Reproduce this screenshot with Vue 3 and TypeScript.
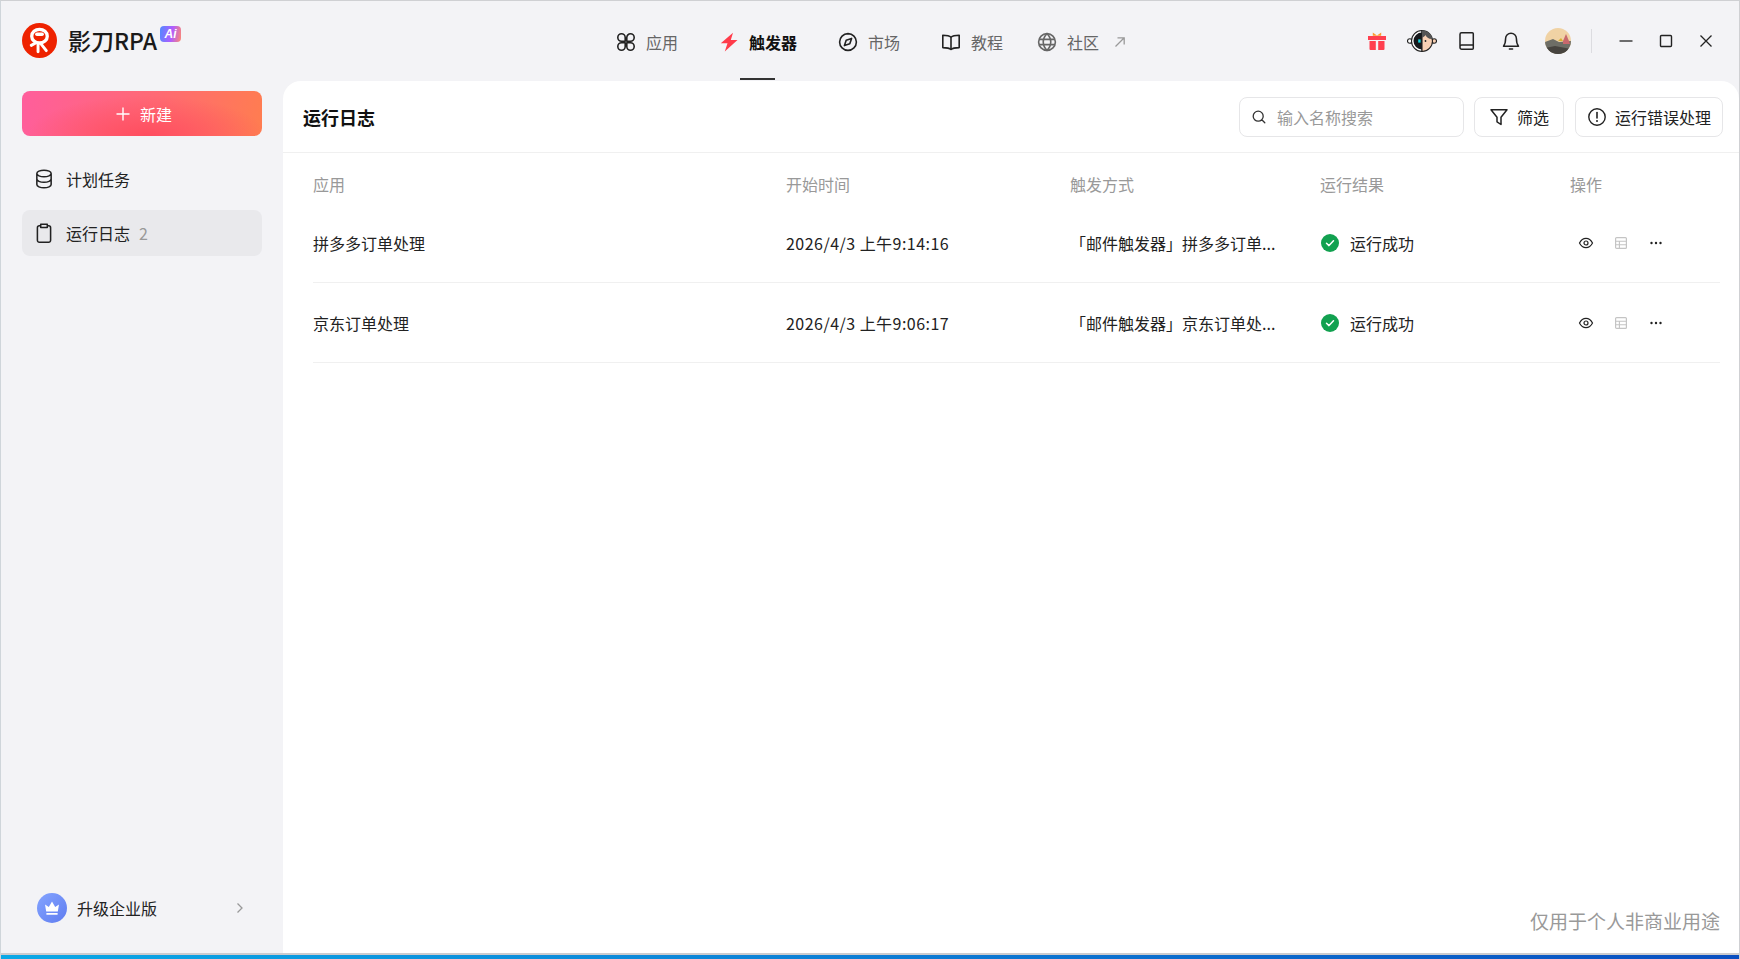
<script setup lang="ts">
interface NavItem {
  label: string
  active?: boolean
  muted?: boolean
  filled?: boolean
  paths: string[]
}

interface LogRow {
  app: string
  time: string
  trigger: string
}

const navItems: NavItem[] = [
  {
    label: '应用',
    paths: [
      'M5.500 1.800a3.700 3.700 0 0 1 3.700 3.700v3.700H5.500a3.700 3.700 0 0 1 0-7.400z',
      'M14.500 1.800a3.700 3.700 0 0 1 0 7.400h-3.700V5.500a3.700 3.700 0 0 1 3.700-3.700z',
      'M5.500 10.800h3.700v3.700a3.700 3.700 0 1 1-3.700-3.700z',
      'M10.800 10.800h3.700a3.700 3.700 0 1 1-3.700 3.700z',
    ],
  },
  { label: '触发器', active: true, filled: true, paths: ['M14 .8 1.800 11.300h6.700L5.800 19.400 18.500 8h-6.700z'] },
  {
    label: '市场',
    paths: [
      'M10 1.600a8.400 8.400 0 1 0 0 16.800a8.400 8.400 0 0 0 0-16.800z',
      'M13.600 6.400 11.800 11.800 6.400 13.600 8.200 8.200z',
    ],
  },
  {
    label: '教程',
    paths: [
      'M10 5.200C8.600 3.800 6 3.200 1.800 3.200v12.400c4.200 0 6.800.5 8.200 1.900 1.400-1.400 4-1.900 8.200-1.900V3.200C14 3.200 11.400 3.800 10 5.200z',
      'M10 5.200v12.300',
    ],
  },
  {
    label: '社区',
    muted: true,
    paths: [
      'M10 1.600a8.400 8.400 0 1 0 0 16.800a8.400 8.400 0 0 0 0-16.800z',
      'M10 1.600c-5 5-5 11.800 0 16.800c5-5 5-11.800 0-16.800z',
      'M2 7.400h16M2 12.600h16',
    ],
  },
]

const columns = ['应用', '开始时间', '触发方式', '运行结果', '操作']

const rows: LogRow[] = [
  { app: '拼多多订单处理', time: '2026/4/3 上午9:14:16', trigger: '「邮件触发器」拼多多订单...' },
  { app: '京东订单处理', time: '2026/4/3 上午9:06:17', trigger: '「邮件触发器」京东订单处...' },
]
</script>

<template>
  <div class="window">
    <header class="topbar">
      <div class="brand">
        <svg class="brand-logo" viewBox="0 0 36 36" width="35" height="35">
          <circle cx="18" cy="18" r="18" fill="#ee2200" />
          <ellipse cx="18" cy="13.500" rx="8" ry="7" fill="none" stroke="#fff" stroke-width="3.400" />
          <rect x="13.500" y="9.800" width="9" height="3.600" rx="1.800" fill="#fff" />
          <path d="M14 20.500 9.500 23M16.500 21v8.500M19.500 21.500l5.500 7" stroke="#fff" stroke-width="3" stroke-linecap="round" fill="none" />
        </svg>
        <span class="brand-name">影刀RPA</span>
        <span class="brand-ai">Ai</span>
      </div>

      <nav class="nav">
        <div
          v-for="item in navItems"
          :key="item.label"
          class="nav-item"
          :class="{ 'is-active': item.active, 'is-muted': item.muted }"
        >
          <svg viewBox="0 0 20 20" width="20" height="20" class="nav-icon">
            <path
              v-for="d in item.paths"
              :key="d"
              :d="d"
              :fill="item.filled ? '#ff3b4a' : 'none'"
              :stroke="item.filled ? 'none' : 'currentColor'"
              stroke-width="1.600"
              stroke-linejoin="round"
            />
          </svg>
          <span>{{ item.label }}</span>
          <svg v-if="item.muted" class="nav-out" viewBox="0 0 14 14" width="14" height="14">
            <path d="M2.500 11.500 11 3M4.500 2.800h6.700v6.700" fill="none" stroke="#999" stroke-width="1.300" />
          </svg>
        </div>
      </nav>

      <div class="tools">
        <svg class="tool" viewBox="0 0 20 20" width="20" height="20">
          <path d="M5.800 1.500 10 4.500l4.200-3v3.300H5.800z" fill="#ff9a2e" />
          <rect x="1" y="5" width="18" height="4" fill="#ff3f4f" />
          <path d="M2.500 10h6.300v9H3.500a1 1 0 0 1-1-1zM11.200 10h6.300v8a1 1 0 0 1-1 1h-5.300z" fill="#ff3f4f" />
        </svg>
        <svg class="tool tool-robot" viewBox="0 0 30 24" width="30" height="24">
          <circle cx="2.800" cy="12" r="2.300" fill="#fff" stroke="#222" stroke-width="1.100" />
          <circle cx="27.200" cy="12" r="2.300" fill="#f8d0b4" stroke="#222" stroke-width="1.100" />
          <path d="M15 1.500a10.500 10.500 0 0 0 0 21z" fill="#fff" stroke="#222" stroke-width="1.100" />
          <path d="M15 3.500a8.500 8.500 0 0 0 0 17z" fill="#16181c" />
          <path d="M15 1.500a10.500 10.500 0 0 1 0 21z" fill="#f8d0b4" stroke="#222" stroke-width="1.100" />
          <path d="M15 1.500c5.500 0 9.800 3.500 10.400 8.500-3.400.3-6-1.600-7-4-.6 1.300-1.800 2.200-3.400 2.500z" fill="#555" />
          <rect x="11.200" y="10.400" width="2.400" height="3.200" fill="#12d8e0" />
          <circle cx="18.500" cy="12" r=".9" fill="#222" />
        </svg>
        <svg class="tool" viewBox="0 0 20 20" width="20" height="20">
          <path d="M4.500 1.800h10.800a1 1 0 0 1 1 1v14.400a1 1 0 0 1-1 1H4.700a1.700 1.700 0 0 1-1.700-1.700V3.300a1.500 1.500 0 0 1 1.500-1.500zM3 15.300a1.500 1.500 0 0 1 1.500-1.300h11.800" fill="none" stroke="#222" stroke-width="1.500" />
        </svg>
        <svg class="tool" viewBox="0 0 20 20" width="20" height="20">
          <path d="M10 2.200a5.400 5.400 0 0 0-5.400 5.400c0 4.600-.9 6.200-2.100 7.600h15c-1.200-1.400-2.100-3-2.100-7.600A5.400 5.400 0 0 0 10 2.200zM8.400 18h3.200" fill="none" stroke="#222" stroke-width="1.500" stroke-linejoin="round" stroke-linecap="round" />
        </svg>
        <svg class="tool-avatar" viewBox="0 0 26 26" width="26" height="26">
          <defs>
            <clipPath id="avatar-clip"><circle cx="13" cy="13" r="13" /></clipPath>
          </defs>
          <g clip-path="url(#avatar-clip)">
            <rect width="26" height="26" fill="#f0d2a4" />
            <path d="M0 14 8 11l6 3 12-1v13H0z" fill="#6e6e66" />
            <path d="M0 20l10-2 16 3v5H0z" fill="#47443f" />
            <path d="M13 13l3-3 2 3z" fill="#d8b030" />
            <path d="M18 13l3-7 3 7 1 3h-7z" fill="#c8686c" />
          </g>
        </svg>
      </div>

      <div class="window-btns">
        <svg viewBox="0 0 16 16" width="16" height="16"><path d="M1.500 8h13" stroke="#222" stroke-width="1.300" /></svg>
        <svg viewBox="0 0 16 16" width="16" height="16"><rect x="2.500" y="2.500" width="11" height="11" rx="1" fill="none" stroke="#222" stroke-width="1.400" /></svg>
        <svg viewBox="0 0 16 16" width="16" height="16"><path d="M2.500 2.500l11 11M13.500 2.500l-11 11" stroke="#222" stroke-width="1.300" /></svg>
      </div>
    </header>

    <div class="body">
      <aside class="sidebar">
        <button class="new-btn" type="button">
          <svg viewBox="0 0 14 14" width="14" height="14"><path d="M7 .5v13M.5 7h13" stroke="#fff" stroke-width="1.400" /></svg>
          <span>新建</span>
        </button>

        <div class="side-item">
          <svg viewBox="0 0 20 20" width="22" height="22">
            <path d="M3.500 5c0-1.700 2.900-3 6.500-3s6.500 1.300 6.500 3v10c0 1.700-2.900 3-6.500 3s-6.500-1.300-6.500-3zM3.500 5c0 1.700 2.900 3 6.500 3s6.500-1.300 6.500-3M3.500 10c0 1.700 2.900 3 6.500 3s6.500-1.300 6.500-3" fill="none" stroke="#222" stroke-width="1.400" />
          </svg>
          <span>计划任务</span>
        </div>
        <div class="side-item is-current">
          <svg viewBox="0 0 20 20" width="22" height="22">
            <path d="M7 3.500H5.800A1.800 1.800 0 0 0 4 5.300v11.400a1.800 1.800 0 0 0 1.800 1.800h8.400a1.800 1.800 0 0 0 1.800-1.800V5.300a1.800 1.800 0 0 0-1.800-1.800H13M7 2h6v3H7z" fill="none" stroke="#222" stroke-width="1.400" stroke-linejoin="round" />
          </svg>
          <span>运行日志</span>
          <em class="side-count">2</em>
        </div>

        <div class="upgrade">
          <svg class="upgrade-crown" viewBox="0 0 30 30" width="30" height="30">
            <defs>
              <linearGradient id="crown-bg" x1="0" y1="0" x2="1" y2="1">
                <stop offset="0" stop-color="#84a4ff" />
                <stop offset="1" stop-color="#5f7cf0" />
              </linearGradient>
            </defs>
            <circle cx="15" cy="15" r="15" fill="url(#crown-bg)" />
            <path d="M8 11.500l3.800 2.600L15 8.500l3.200 5.600 3.800-2.600-1.200 7H9.200zM9.400 20h11.200v1.800H9.400z" fill="#fff" />
          </svg>
          <span class="upgrade-text">升级企业版</span>
          <svg viewBox="0 0 10 14" width="10" height="14"><path d="M2.500 2.500 7 7l-4.500 4.500" fill="none" stroke="#999" stroke-width="1.300" /></svg>
        </div>
      </aside>

      <main class="main">
        <div class="main-head">
          <h1>运行日志</h1>
          <div class="search">
            <svg viewBox="0 0 16 16" width="16" height="16"><path d="M7.200 2.200a5 5 0 1 0 0 10a5 5 0 0 0 0-10zM10.800 10.800l3 3" fill="none" stroke="#333" stroke-width="1.300" stroke-linecap="round" /></svg>
            <span>输入名称搜索</span>
          </div>
          <button class="head-btn" type="button">
            <svg viewBox="0 0 20 20" width="20" height="20"><path d="M2 2.800h16l-6 7.400v7.300l-4-2.700v-4.600z" fill="none" stroke="#222" stroke-width="1.500" stroke-linejoin="round" /></svg>
            <span>筛选</span>
          </button>
          <button class="head-btn" type="button">
            <svg viewBox="0 0 20 20" width="20" height="20">
              <circle cx="10" cy="10" r="8.200" fill="none" stroke="#222" stroke-width="1.400" />
              <path d="M10 5.500v5.500" stroke="#222" stroke-width="1.600" stroke-linecap="round" />
              <circle cx="10" cy="14" r="1" fill="#222" />
            </svg>
            <span>运行错误处理</span>
          </button>
        </div>

        <div class="table">
          <div class="tr th">
            <div v-for="col in columns" :key="col">{{ col }}</div>
          </div>
          <div v-for="row in rows" :key="row.app" class="tr td">
            <div>{{ row.app }}</div>
            <div class="cell-time">{{ row.time }}</div>
            <div class="cell-trigger">{{ row.trigger }}</div>
            <div class="cell-status">
              <svg viewBox="0 0 18 18" width="18" height="18">
                <circle cx="9" cy="9" r="9" fill="#12a150" />
                <path d="M5.500 9.200 8 11.600l4.500-4.800" fill="none" stroke="#fff" stroke-width="1.500" stroke-linecap="round" stroke-linejoin="round" />
              </svg>
              <span>运行成功</span>
            </div>
            <div class="cell-ops">
              <svg viewBox="0 0 16 16" width="16" height="16">
                <path d="M1.500 8C3 5 5.300 3.300 8 3.300s5 1.700 6.500 4.700c-1.500 3-3.800 4.700-6.500 4.700S3 11 1.500 8z" fill="none" stroke="#222" stroke-width="1.200" />
                <circle cx="8" cy="8" r="2" fill="none" stroke="#222" stroke-width="1.200" />
              </svg>
              <svg viewBox="0 0 16 16" width="16" height="16">
                <rect x="2.600" y="2.600" width="10.800" height="10.800" rx="1" fill="none" stroke="#c4c4c4" stroke-width="1.200" />
                <path d="M2.600 6.200h10.800M2.600 9.800h10.800M6.400 6.200v7.200" fill="none" stroke="#c4c4c4" stroke-width="1.100" />
              </svg>
              <svg viewBox="0 0 16 16" width="16" height="16">
                <circle cx="3.500" cy="8" r="1.200" fill="#222" />
                <circle cx="8" cy="8" r="1.200" fill="#222" />
                <circle cx="12.500" cy="8" r="1.200" fill="#222" />
              </svg>
            </div>
          </div>
        </div>

        <div class="watermark">仅用于个人非商业用途</div>
      </main>
    </div>

    <div class="desktop-strip"></div>
  </div>
</template>

<style>
html,
body {
  margin: 0;
  background: #dfe6ee;
}
</style>

<style scoped>
.window {
  display: flex;
  flex-direction: column;
  box-sizing: border-box;
  width: 1740px;
  height: 959px;
  overflow: hidden;
  padding-left: 1px;
  background: #f3f3f6;
  border-top: 1px solid #cfd0d3;
  border-left: 1px solid #cfd5da;
  border-right: 1px solid #cfd0d3;
  font-family: "Noto Sans CJK SC", "Noto Sans", sans-serif;
  font-size: 16px;
  color: #222;
}

/* top bar */
.topbar {
  display: flex;
  align-items: center;
  flex: none;
  height: 80px;
  position: relative;
}

.brand {
  display: flex;
  align-items: center;
  width: 596px;
  padding-left: 20px;
  box-sizing: border-box;
  flex: none;
  margin-bottom: 2px;
}

.brand-logo {
  flex: none;
}

.brand-name {
  margin-left: 11px;
  font-size: 23px;
  font-weight: 500;
  color: #1a1a1a;
}

.brand-ai {
  width: 21px;
  height: 16px;
  margin: -12px 0 0 3px;
  border-radius: 4px;
  background: linear-gradient(100deg, #4f8bff, #b05cff 55%, #ff8a70);
  color: #fff;
  font: italic 700 12px/16px "Liberation Sans", sans-serif;
  text-align: center;
}

.nav {
  display: flex;
  align-items: center;
  gap: 41px;
  align-self: stretch;
  margin-left: 18px;
}

.nav-item {
  display: flex;
  align-items: center;
  gap: 10px;
  position: relative;
  height: 100%;
  color: #666;
  margin-top: 2px;
}

.nav-icon {
  color: #222;
}

.is-active {
  color: #111;
  font-weight: 700;
}

.is-active::after {
  content: "";
  position: absolute;
  left: 21px;
  bottom: 2px;
  width: 35px;
  height: 2px;
  background: #333;
}

.is-muted {
  margin-left: -7px;
}

.is-muted .nav-icon {
  color: #666;
}

.nav-out {
  margin-left: 4px;
}

.tools {
  display: flex;
  align-items: center;
  margin-left: auto;
  margin-right: 20px;
  gap: 24px;
}

.tool-robot {
  margin: 0 -4px;
}

.tool-avatar {
  display: block;
}

.window-btns {
  display: flex;
  align-items: center;
  gap: 24px;
  height: 24px;
  padding: 0 25px 0 26px;
  border-left: 1px solid #dcdce0;
}

/* sidebar */
.body {
  flex: 1;
  display: flex;
  min-height: 0;
}

.sidebar {
  display: flex;
  flex-direction: column;
  flex: none;
  width: 281px;
  box-sizing: border-box;
  padding: 10px 21px 0 20px;
}

.new-btn {
  display: flex;
  align-items: center;
  justify-content: center;
  gap: 10px;
  height: 45px;
  margin-bottom: 20px;
  padding: 0 0 0 4px;
  border: 0;
  border-radius: 8px;
  background:
    radial-gradient(ellipse 50% 90% at 52% 100%, #ff4d5f 0, rgba(255, 77, 95, 0) 100%),
    linear-gradient(100deg, #ff5e9c 0, #ff6a74 55%, #ff7d50 100%);
  color: #fff;
  font: inherit;
}

.side-item {
  display: flex;
  align-items: center;
  gap: 11px;
  height: 46px;
  margin-bottom: 8px;
  padding-left: 11px;
  border-radius: 8px;
}

.is-current {
  background: #e9e9ec;
}

.side-count {
  margin-left: -2px;
  color: #999;
  font-style: normal;
}

.upgrade {
  display: flex;
  align-items: center;
  margin-top: auto;
  margin-bottom: 30px;
  padding: 0 17px 0 15px;
}

.upgrade-text {
  flex: 1;
  margin-left: 10px;
}

/* main panel */
.main {
  flex: 1;
  position: relative;
  min-width: 0;
  background: #fff;
  border-radius: 18px 18px 0 0;
}

.main-head {
  display: flex;
  align-items: center;
  gap: 11px;
  height: 71px;
  padding: 0 16px 0 20px;
  border-bottom: 1px solid #f0f0f0;
}

.main-head h1 {
  flex: 1;
  margin: 0;
  font-size: 18px;
  font-weight: 700;
  color: #111;
}

.search,
.head-btn {
  display: flex;
  align-items: center;
  box-sizing: border-box;
  height: 40px;
  border: 1px solid #e6e6e8;
  border-radius: 8px;
  background: #fff;
  font: inherit;
  color: #222;
}

.search {
  width: 225px;
  gap: 10px;
  padding-left: 11px;
  margin-right: -1px;
  color: #999;
}

.head-btn {
  gap: 8px;
  padding: 0 11px;
}

.head-btn:nth-of-type(1) {
  padding: 0 14px;
}

.table {
  padding: 11px 19px 0 30px;
}

.tr {
  display: grid;
  grid-template-columns: 473px 284px 250px 250px 1fr;
  align-items: center;
}

.th {
  height: 39px;
  color: #999;
}

.td {
  height: 79px;
  border-bottom: 1px solid #f0f0f0;
  color: #222;
}

.cell-time {
  letter-spacing: 0.47px;
}

.cell-trigger {
  white-space: nowrap;
}

.cell-status {
  display: flex;
  align-items: center;
  gap: 11px;
  padding-left: 1px;
}

.cell-ops {
  display: flex;
  align-items: center;
  gap: 19px;
  padding-left: 8px;
}

.watermark {
  position: absolute;
  right: 19px;
  bottom: 19px;
  font-size: 19px;
  color: #999;
}

.desktop-strip {
  flex: none;
  height: 4px;
  margin: 0 -1px 0 -2px;
  border-top: 2px solid #cbcbce;
  background: linear-gradient(90deg, #0aa8e6, #0c86d8 40%, #0a4fc0);
}
</style>
